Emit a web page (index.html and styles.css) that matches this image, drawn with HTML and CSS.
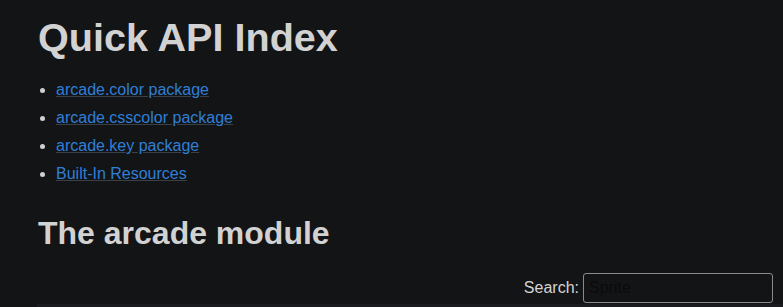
FILE: index.html
```html
<!DOCTYPE html>
<html lang="en">
<head>
    <meta charset="UTF-8">
    <title>Quick API Index</title>
    <link rel="stylesheet" href="styles.css">
</head>
<body>
    <div class="page">
        <h1>Quick API Index</h1>
        <ul class="toc">
            <li><a href="#">arcade.color package</a></li>
            <li><a href="#">arcade.csscolor package</a></li>
            <li><a href="#">arcade.key package</a></li>
            <li><a href="#">Built-In Resources</a></li>
        </ul>
        <h2>The arcade module</h2>
        <div class="search-row">
            <label for="search">Search:</label>
            <input id="search" type="text" value="Sprite">
        </div>
        <div class="api-table"></div>
    </div>
</body>
</html>
```

FILE: styles.css
```css
* {
    margin: 0;
    padding: 0;
    box-sizing: border-box;
    font-family: "Liberation Sans", Arial, sans-serif;
}
body, html {
    width: 100%;
    height: 100%;
    overflow: hidden;
    background: #131416;
    color: #d0d0d0;
}
.page {
    padding-left: 38px;
}
h1 {
    font-size: 39.6px;
    font-weight: bold;
    margin-top: 15px;
    margin-bottom: 16px;
    color: #d2d2d2;
}
.toc {
    list-style: disc;
    padding-left: 18px;
    color: #d0d0d0;
}
.toc li {
    font-size: 16px;
    line-height: 28px;
}
.toc a {
    color: #2f7fd6;
    text-decoration: underline;
    text-decoration-color: #3a4048;
}
h2 {
    font-size: 32px;
    font-weight: bold;
    margin-top: 27px;
    color: #d2d2d2;
}
.search-row {
    display: flex;
    justify-content: flex-end;
    align-items: center;
    gap: 4px;
    margin-top: 21px;
    padding-right: 10px;
    font-size: 16px;
}
.search-row label {
    color: #d4d4d4;
}
.search-row input {
    width: 190px;
    height: 30px;
    border: 1px solid #8a8a8a;
    border-radius: 3px;
    background: #131416;
    color: #0b0b0b;
    font-size: 16px;
    padding: 0 5px;
}
.api-table {
    margin-top: 1px;
    margin-left: -1px;
    height: 10px;
    background: #1a1b1e;
}
```
